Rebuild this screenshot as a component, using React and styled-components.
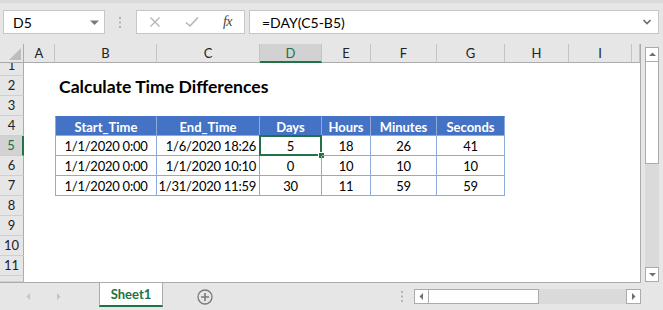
import React from "react";
import styled, { createGlobalStyle } from "styled-components";

const GREEN = "#217346";

const GlobalStyle = createGlobalStyle`
  body {
    margin: 0;
    background: #e6e6e6;
  }
  * {
    box-sizing: border-box;
  }
`;

const columns = [
  { key: "", w: 24 },
  { key: "A", w: 31 },
  { key: "B", w: 102 },
  { key: "C", w: 103 },
  { key: "D", w: 62 },
  { key: "E", w: 49 },
  { key: "F", w: 66 },
  { key: "G", w: 68 },
  { key: "H", w: 64 },
  { key: "I", w: 63 },
  { key: "J", w: 0 },
];

const rows = [
  { n: 1, h: 13 },
  { n: 2, h: 20 },
  { n: 3, h: 20 },
  { n: 4, h: 20 },
  { n: 5, h: 20 },
  { n: 6, h: 20 },
  { n: 7, h: 20 },
  { n: 8, h: 20 },
  { n: 9, h: 20 },
  { n: 10, h: 20 },
  { n: 11, h: 20 },
  { n: 12, h: 0 },
];

const headers = ["Start_Time", "End_Time", "Days", "Hours", "Minutes", "Seconds"];
const data = {
  5: ["1/1/2020 0:00", "1/6/2020 18:26", "5", "18", "26", "41"],
  6: ["1/1/2020 0:00", "1/1/2020 10:10", "0", "10", "10", "10"],
  7: ["1/1/2020 0:00", "1/31/2020 11:59", "30", "11", "59", "59"],
};
const tableCols = ["B", "C", "D", "E", "F", "G"];

const Window = styled.div`
  width: 663px;
  height: 310px;
  overflow: hidden;
  background: #e6e6e6;
  border-top: 3px solid #dadada;
  padding-top: 7px;
  font-family: Lato, "Liberation Sans", sans-serif;
  color: #000;
  display: flex;
  flex-direction: column;
`;

const FormulaRow = styled.div`
  height: 25px;
  margin: 0 4px 10px 3px;
  display: flex;
  align-items: stretch;
`;

const Box = styled.div`
  background: #fff;
  border: 1px solid #c6c6c6;
  display: flex;
  align-items: center;
`;

const NameBox = styled(Box)`
  width: 102px;
  justify-content: space-between;
  padding: 0 5px 0 9px;
  font-size: 14px;
`;

const Grip = styled.div`
  width: 31px;
  display: flex;
  align-items: center;
  justify-content: center;
`;

const FxBox = styled(Box)`
  width: 109px;
  padding: 0 12px 0 12px;
  justify-content: space-between;
`;

const Fx = styled.span`
  font-family: "Liberation Serif", serif;
  font-style: italic;
  font-size: 14px;
  color: #444;
  letter-spacing: -0.5px;
`;

const FormulaInput = styled(Box)`
  flex: 1;
  margin-left: 4px;
  padding: 0 6px 0 12px;
  justify-content: space-between;
  font-size: 14px;
`;

const Sheet = styled.div`
  display: flex;
  align-items: flex-start;
  height: 239px;
`;

const GridArea = styled.div`
  width: 641px;
  height: 239px;
  background: #fff;
  border-right: 1px solid #ababab;
  border-bottom: 1px solid #ababab;
  display: grid;
  grid-template-columns: ${(p) => p.$cols};
  grid-template-rows: ${(p) => p.$rows};
  overflow: hidden;
`;

const Corner = styled.div`
  background: #e6e6e6;
  border-right: 1px solid #ababab;
  border-bottom: 1px solid #ababab;
  display: flex;
  align-items: flex-end;
  justify-content: flex-end;
  padding: 0 2px 2px 0;
`;

const ColHead = styled.div`
  background: ${(p) => (p.$active ? "#d2d2d2" : "#e6e6e6")};
  color: ${(p) => (p.$active ? GREEN : "#222")};
  border-right: 1px solid #c4c4c4;
  border-bottom: ${(p) => (p.$active ? `2px solid ${GREEN}` : "1px solid #ababab")};
  font-size: 13px;
  display: flex;
  align-items: center;
  justify-content: center;
  padding-top: ${(p) => (p.$active ? "1px" : "0")};
`;

const RowHead = styled.div`
  background: ${(p) => (p.$active ? "#d2d2d2" : "#e6e6e6")};
  color: ${(p) => (p.$active ? GREEN : "#222")};
  border-right: ${(p) => (p.$active ? `2px solid ${GREEN}` : "1px solid #ababab")};
  border-bottom: 1px solid #cfcfcf;
  font-size: 13px;
  overflow: hidden;
  display: flex;
  align-items: flex-end;
  justify-content: center;
`;

const RowLabel = styled.span`
  height: 19px;
  line-height: 19px;
  flex-shrink: 0;
`;

const Cell = styled.div`
  position: relative;
  font-size: 13px;
  letter-spacing: -0.25px;
  white-space: nowrap;
  display: flex;
  align-items: center;
  justify-content: ${(p) => p.$align || "center"};
  padding: 0 3px;
`;

const Title = styled(Cell)`
  overflow: visible;
  justify-content: flex-start;
  padding-left: 4px;
  font-size: 17.6px;
  letter-spacing: 0;
  font-weight: 700;
`;

const TableCell = styled(Cell)`
  border-right: 1px solid #8ea9db;
  border-bottom: 1px solid #8ea9db;
  border-left: ${(p) => (p.$first ? "1px solid #8ea9db" : "none")};
`;

const TableHead = styled(TableCell)`
  background: #4472c4;
  color: #fff;
  font-weight: 700;
  letter-spacing: 0;
  border-top: 1px solid #4472c4;
  padding-top: 1px;
`;

const Selection = styled.div`
  position: absolute;
  top: -1px;
  left: -1px;
  right: -1px;
  bottom: -1px;
  border: 2px solid ${GREEN};
`;

const Handle = styled.div`
  position: absolute;
  right: -5px;
  bottom: -5px;
  width: 7px;
  height: 7px;
  background: ${GREEN};
  border: 1px solid #fff;
`;

const VScroll = styled.div`
  width: 14px;
  height: 235px;
  margin: 3px 0 0 4px;
  display: flex;
  flex-direction: column;
  background: #dadada;
`;

const ScrollButton = styled.div`
  width: 14px;
  height: 15px;
  flex-shrink: 0;
  background: #fff;
  border: 1px solid #ababab;
  display: flex;
  align-items: center;
  justify-content: center;
`;

const VThumb = styled.div`
  height: 102px;
  background: #fff;
  border: 1px solid #ababab;
  border-top: none;
`;

const Spacer = styled.div`
  flex: 1;
`;

const BottomBar = styled.div`
  height: 27px;
  display: flex;
  align-items: flex-start;
`;

const NavArrows = styled.div`
  width: 99px;
  height: 27px;
  display: flex;
  align-items: center;
  padding-left: 25px;
  gap: 23px;
`;

const Tab = styled.div`
  width: 64px;
  height: 24px;
  background: #fff;
  border-left: 1px solid #ababab;
  border-right: 1px solid #ababab;
  border-bottom: 2px solid ${GREEN};
  color: ${GREEN};
  font-weight: 700;
  font-size: 13px;
  display: flex;
  align-items: center;
  justify-content: center;
`;

const AddSheet = styled.div`
  margin: 6px 0 0 34px;
  display: flex;
`;

const HScrollGrip = styled.div`
  margin: 8px 10px 0 0;
  display: flex;
`;

const HScroll = styled.div`
  width: 227px;
  height: 15px;
  margin-top: 6px;
  margin-right: 22px;
  background: #dadada;
  display: flex;
`;

const HButton = styled.div`
  width: 15px;
  height: 15px;
  background: #fff;
  border: 1px solid #ababab;
  display: flex;
  align-items: center;
  justify-content: center;
`;

const HThumb = styled.div`
  width: 110px;
  background: #fff;
  border: 1px solid #ababab;
  border-left: none;
`;

const Dots = ({ color = "#9a9a9a" }) => (
  <svg width="3" height="11" viewBox="0 0 3 11">
    <rect x="0" y="0" width="2" height="2" fill={color} />
    <rect x="0" y="4.5" width="2" height="2" fill={color} />
    <rect x="0" y="9" width="2" height="2" fill={color} />
  </svg>
);

const Triangle = ({ dir, color = "#707070", size = 7 }) => {
  const pts = {
    down: "0,2 7,2 3.5,5.5",
    up: "0,5 7,5 3.5,1.5",
    left: "5,0 5,7 1.5,3.5",
    right: "2,0 2,7 5.5,3.5",
  }[dir];
  return (
    <svg width={size} height={size} viewBox="0 0 7 7">
      <polygon points={pts} fill={color} />
    </svg>
  );
};

export default function App() {
  const template = columns.map((c) => (c.w ? `${c.w}px` : "1fr")).join(" ");
  const rowTemplate = ["19px", ...rows.map((r) => (r.h ? `${r.h}px` : "1fr"))].join(" ");

  const renderCell = (col, r) => {
    const key = `${col}${r}`;
    if (key === "B2") return <Title key={key}>Calculate Time Differences</Title>;
    const ti = tableCols.indexOf(col);
    if (ti >= 0 && r === 4)
      return (
        <TableHead key={key} $first={ti === 0}>
          {headers[ti]}
        </TableHead>
      );
    if (ti >= 0 && data[r])
      return (
        <TableCell key={key} $first={ti === 0} $align={col === "C" ? "flex-end" : "center"}>
          {data[r][ti]}
          {key === "D5" && (
            <Selection>
              <Handle />
            </Selection>
          )}
        </TableCell>
      );
    return <Cell key={key} />;
  };

  return (
    <Window>
      <GlobalStyle />
      <FormulaRow>
        <NameBox>
          D5
          <Triangle dir="down" color="#7a7a7a" size={9} />
        </NameBox>
        <Grip>
          <Dots color="#b4b4b4" />
        </Grip>
        <FxBox>
          <svg width="12" height="12" viewBox="0 0 12 12">
            <path d="M1.5 1.5 L10.5 10.5 M10.5 1.5 L1.5 10.5" stroke="#b4b4b4" strokeWidth="1.3" fill="none" />
          </svg>
          <svg width="14" height="12" viewBox="0 0 14 12">
            <path d="M1 6.5 L5 10 L13 1.5" stroke="#b4b4b4" strokeWidth="1.6" fill="none" />
          </svg>
          <Fx>fx</Fx>
        </FxBox>
        <FormulaInput>
          =DAY(C5-B5)
          <svg width="10" height="8" viewBox="0 0 10 8">
            <path d="M1.5 2 L5 5.5 L8.5 2" stroke="#6a6a6a" strokeWidth="1.6" fill="none" />
          </svg>
        </FormulaInput>
      </FormulaRow>

      <Sheet>
        <GridArea $cols={template} $rows={rowTemplate}>
          <Corner>
            <svg width="12" height="12" viewBox="0 0 12 12">
              <polygon points="12,0 12,12 0,12" fill="#bdbdbd" />
            </svg>
          </Corner>
          {columns.slice(1).map((c) => (
            <ColHead key={c.key} $active={c.key === "D"}>
              {c.key === "J" ? "" : c.key}
            </ColHead>
          ))}
          {rows.map((r) => (
            <React.Fragment key={r.n}>
              <RowHead $active={r.n === 5}>
                <RowLabel>{r.n === 12 ? "" : r.n}</RowLabel>
              </RowHead>
              {columns.slice(1).map((c) => renderCell(c.key, r.n))}
            </React.Fragment>
          ))}
        </GridArea>
        <VScroll>
          <ScrollButton>
            <Triangle dir="up" />
          </ScrollButton>
          <VThumb />
          <Spacer />
          <ScrollButton>
            <Triangle dir="down" />
          </ScrollButton>
        </VScroll>
      </Sheet>

      <BottomBar>
        <NavArrows>
          <Triangle dir="left" color="#c4c4c4" />
          <Triangle dir="right" color="#c4c4c4" />
        </NavArrows>
        <Tab>Sheet1</Tab>
        <AddSheet>
          <svg width="16" height="16" viewBox="0 0 16 16">
            <circle cx="8" cy="8" r="7" stroke="#7a7a7a" strokeWidth="1.3" fill="none" />
            <path d="M8 4 V12 M4 8 H12" stroke="#7a7a7a" strokeWidth="1.6" />
          </svg>
        </AddSheet>
        <Spacer />
        <HScrollGrip>
          <Dots color="#b4b4b4" />
        </HScrollGrip>
        <HScroll>
          <HButton>
            <Triangle dir="left" />
          </HButton>
          <HThumb />
          <Spacer />
          <HButton>
            <Triangle dir="right" />
          </HButton>
        </HScroll>
      </BottomBar>
    </Window>
  );
}
